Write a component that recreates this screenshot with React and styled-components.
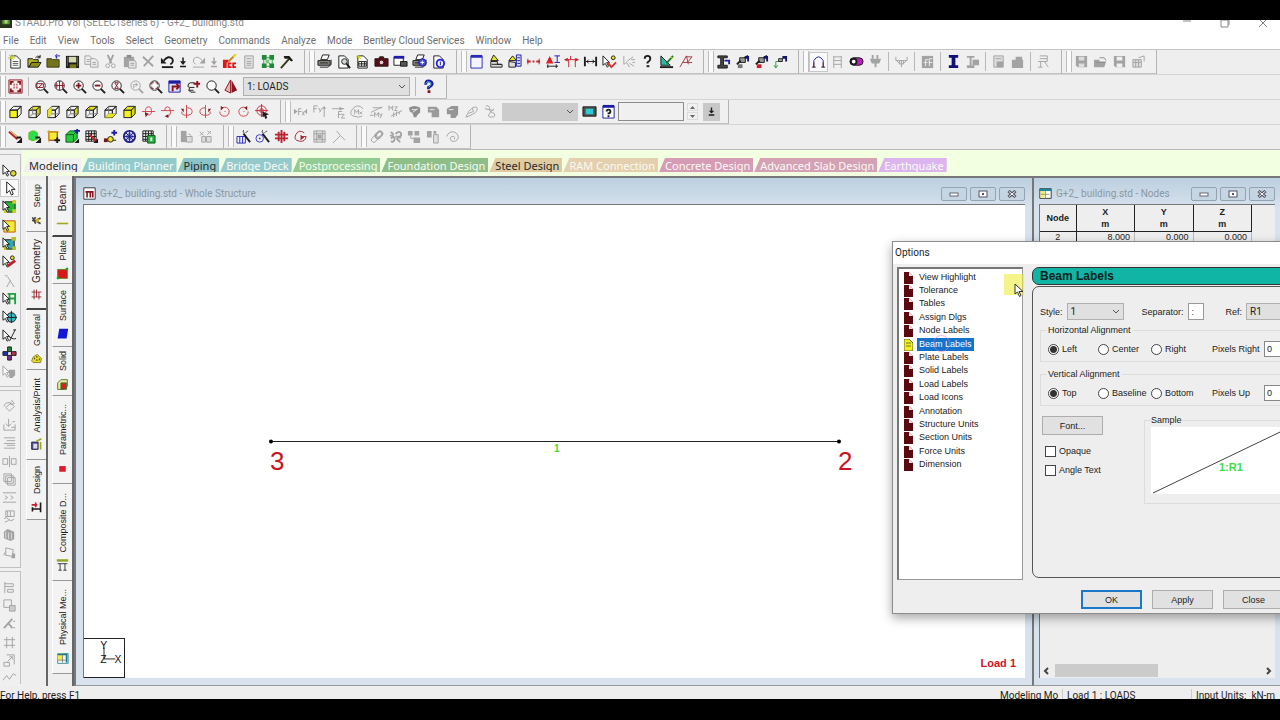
import React, { useState } from "react";
import styled, { createGlobalStyle, css } from "styled-components";

const BLACK = "#1c1c1c";
const GRAY = "#a3a3a3";
const RED = "#c8202c";
const WINE = "#8a1420";
const BLUE = "#1c1ca8";
const GREEN = "#22b03a";
const YELLOW = "#e8e81c";

const Line = ({ d, c = BLACK, w = 1 }) => <path d={d} fill="none" stroke={c} strokeWidth={w} />;
const Fill = ({ d, c = BLACK, s = "none" }) => <path d={d} fill={c} stroke={s} />;

const cube = (front, top, side) => (
  <>
    <Fill d="M2 6.500h8v8h-8z" c={front ? "#f4f41a" : "none"} s={BLACK} />
    <Fill d="M2 6.500l4-4h8l-4 4z" c={top ? "#e4e420" : "none"} s={BLACK} />
    <Fill d="M10 6.500l4-4v8l-4 4z" c={side ? "#d8d820" : "none"} s={BLACK} />
    {!front && <Line d="M6 2.500v8h8M2 14.500l4-4" c="#777" />}
  </>
);

const lens = (inner, c = BLACK) => (
  <>
    <circle cx="7" cy="7" r="5" fill={c === BLACK ? "#fafafa" : "none"} stroke={c} />
    <Line d="M10.500 10.500L15 15" c={c} w={2} />
    {inner}
  </>
);

const orbit = (d, head) => (
  <>
    <Line d={d} c="#d0444c" />
    <Fill d={head} c={WINE} />
  </>
);

const printer = (
  <>
    <Fill d="M4 6l2-5h7l-2 5z" c="#fff" s={BLACK} />
    <Fill d="M1 7h13v5H1z" c="#8a8a80" s={BLACK} />
    <Line d="M3 9.500h9M3 14h9l3-3V6" c={BLACK} w={1} />
  </>
);

const page = (c = BLACK, fill = "#fff") => <Fill d="M3 2h6l4 4v9H3z" c={fill} s={c} />;
const pointer = (c = BLACK) => <Fill d="M1 2v10l2.500-2 2 4 1.500-1-2-4h3z" c="#fafafa" s={c} />;
const disk = (c, inner) => (
  <>
    <Fill d="M2 2h12v12H4l-2-2z" c={c} />
    <Fill d="M5 3h6v4H5zM5 10h6v4H5z" c={inner} />
  </>
);
const flange = (accent) => (
  <>
    <Fill d="M5 4h6v5H5z" c="#999" s={BLACK} />
    <Line d="M2 11l4-4M10 4l4-2" w={2} />
    <Fill d="M11 2h4v6h-2V5h-2z" c="#15156c" />
    <Fill d="M3 11h5v4H3z" c={accent} />
  </>
);
const wand = (
  <>
    <Line d="M8 5l7 9" w={2} />
    <Line d="M7 3l2 1M13 2l-3 2M8 1v2" c="#555" />
  </>
);

const glyphs = {
  new: <>{page()}<Line d="M5 8h6M5 10h6M5 12h6" c="#555" /><Line d="M4 0v7M0 4h8M1 1l5 5M6 1L1 6" c="#c8cc28" /></>,
  open: <><Fill d="M1 5h5l1 1h5v3H5l-3 5H1z" c="#b4b428" s={BLACK} /><Fill d="M5 9h10l-3 5H2z" c="#8c8c1c" s={BLACK} /><Line d="M9 4q2-3 5-1M14 1v3h-3" /></>,
  close: <><Fill d="M1 5h5l1 1h7v8H1z" c="#74741c" s="#3c3c14" /><Line d="M11 5V2h4M12 0l-2 2 2 2" c={BLUE} /></>,
  save: <><Fill d="M1 2h14v13H1z" c={BLACK} /><Fill d="M4 3h8v6H4z" c="#d8d8b0" /><Fill d="M5 11h7v4H5z" c="#77771c" /><Fill d="M2 3h1v10H2zM13 3h1v10h-1z" c="#70701c" /></>,
  copy: <><Fill d="M1 2h5l3 3v6H1z" c="#ececec" s={GRAY} /><Fill d="M7 5h5l3 3v6H7z" c="#ececec" s={GRAY} /><Line d="M3 6h3M3 8h3M9 9h4M9 11h4" c={GRAY} /></>,
  cut: <><Line d="M5 1l4 9M11 1L7 10" c={GRAY} w={2} /><circle cx="5" cy="12.500" r="2" fill="none" stroke={GRAY} /><circle cx="11" cy="12.500" r="2" fill="none" stroke={GRAY} /></>,
  paste: <><Fill d="M2 3h11v11H2z" c={GRAY} /><Fill d="M5 1h5v3H5z" c="#8c8c8c" /><Fill d="M7 7h7l1 2v6H7z" c="#e4e4e4" s={GRAY} /><Line d="M9 10h4M9 12h4" c={GRAY} /></>,
  remove: <Line d="M2 3l11 10M13 2L3 13" c={GRAY} w={2} />,
  undo: <><Line d="M4 7q5-6 9-2 2 4-2 6" w={2} /><Fill d="M1 4v6h6z" /><Line d="M2 14h12" w={2} /></>,
  caret: <><Line d="M8 2v8M4 14h8" w={2} /><Fill d="M4 7h8l-4 5z" /></>,
  redo: <><Line d="M12 7Q7 1 3 5q-2 4 2 6" c={GRAY} /><Fill d="M15 4v6H9z" c={GRAY} /><Line d="M2 14h12" c={GRAY} /></>,
  caretOff: <><Line d="M8 2v8M4 14h8" c={GRAY} w={2} /><Fill d="M4 7h8l-4 5z" c={GRAY} /></>,
  edit: <><Fill d="M1 6h6v3H5v6H1z" c="#e01818" /><Line d="M10 10H7v4h3M15 10h-3v4h3" c="#e01818" w={2} /><Line d="M14 1L7 8" c="#b88c18" w={2} /><Line d="M15 0l-3 3" c="#e8e020" w={2} /></>,
  calc: <><Fill d="M4 2h9v13H4z" c="#e2e2e2" s={GRAY} /><Line d="M6 5h5M6 8h5M6 10h5M6 12h5" c={GRAY} w={1} /></>,
  nodes: <><Line d="M4 4h9v9H4zM4 4l9 9" c={GREEN} /><Fill d="M2 1h5v5H2zM10 1h5v5h-5zM2 10h5v5H2zM10 10h5v5h-5z" c="#208838" /><Fill d="M6 6h4v4H6z" c="#78c878" /></>,
  hammer: <><Line d="M2 15L11 5" c="#3c3018" w={2} /><Fill d="M5 2h6l4 5-2 1-3-3H6z" /></>,
  printer,
  preview: <>{page()}<circle cx="9" cy="8" r="3" fill="#cfd8d8" stroke={BLACK} /><Line d="M11 10l4 5" w={2} /></>,
  report: <>{page()}<Line d="M4 8h8v5H4zM4 10.500h8M7 8v5M10 8v5" /><Line d="M4 1v6M1 3h6M2 1l4 4" c="#c8cc28" /></>,
  camera: <><Fill d="M1 5h4l1-2h4l1 2h4v8H1z" c="#5c0c14" s={BLACK} /><circle cx="8" cy="9" r="2.500" fill="#e8c8c8" stroke={BLACK} /></>,
  exportView: <><Fill d="M1 3h10v9H1z" c="#fff" s={BLACK} /><Fill d="M1 2h11v3H1z" c={BLUE} /><Fill d="M8 8h7v5H8z" c="#555" s={BLACK} /></>,
  printSetup: <>{printer}<circle cx="11" cy="9" r="4" fill="#4a4ad0" stroke={BLUE} /><Line d="M9 9h4M11 7v4" c="#fff" /></>,
  pageSetup: <>{page()}<circle cx="10" cy="10" r="4" fill="#eef" stroke="#2626d8" strokeWidth="2" /><Line d="M10 8v4" c={BLUE} /></>,
  window: <><Fill d="M2 2h12v13H2z" c="#f4f4ff" s="#2a2ab8" /><Fill d="M2 1h12v3H2z" c="#2a2ab8" /></>,
  layers: <><Fill d="M6 1l5 6H3z" c={YELLOW} s={BLACK} /><Fill d="M3 8h7v3h5v3H3z" c="#ddd" s={BLACK} /><Line d="M4 11h10" /></>,
  layersList: <><Fill d="M6 2l4 5H2z" c={YELLOW} s={BLACK} /><Fill d="M2 8v6h7V9z" c="#ddd" s={BLACK} /><Fill d="M10 1h5v12h-5z" c="#dde" s={BLUE} /><Line d="M11 4h3M11 7h3M11 10h3" c={BLUE} /></>,
  dimension: <><Line d="M1 8h4M7 8h2M11 8h4" c={RED} w={2} /><Line d="M2 5v6M14 5v6" c={RED} /></>,
  section: <><Fill d="M5 2l4 8H1z" c="#e02020" /><Line d="M10 2h6M13 2v7M10 9h6" c={BLUE} w={1} /><Line d="M2 13h12M3 11v4M12 11v4" /></>,
  frame: <><Line d="M1 6h14M5 6v8M12 6v8M7 2v4" c={RED} w={1} /><Fill d="M0 6l4-2v4zM16 6l-4-2v4z" c={RED} /></>,
  span: <><Line d="M2 3v10M14 3v10" w={2} /><Line d="M3 8h10M6 6L4 8l2 2M10 6l2 2-2 2" w={1} /></>,
  pick: <>{pointer()}<circle cx="12" cy="4" r="2" fill={YELLOW} stroke={BLACK} /><Line d="M6 9l4 5 5-5" c="#d83030" w={2} /></>,
  pickOff: <><Line d="M3 2v9l3-2 3 5M6 8l7-5M9 10l5 3M11 6h4M12 9h3" c={GRAY} /></>,
  help: <><Line d="M5 5q0-3 3-3t3 3q0 2-3 4v1" w={2} /><Fill d="M7 12h3v2H7z" /></>,
  design: <><Fill d="M2 2l10 10H2z" c="#2cb8a0" s={BLACK} /><Line d="M15 2L8 10" c="#207828" w={2} /><Line d="M12 3l3 2" c={YELLOW} /><Line d="M1 14h14" w={2} /></>,
  az: <><Line d="M2 14L9 2l2 9M5 9h5M9 3h6l-5 6h5" c="#a83440" w={1} /></>,
  beamEnd: <><Fill d="M2 2h10v2H8v8h4v3H2v-3h3V4H2z" c="#444" s={BLACK} /><Fill d="M9 6h6v5h-2V8H9z" c={BLUE} /></>,
  flangeA: flange("#777"),
  flangeB: flange(RED),
  flangeC: <><Line d="M3 14V8h5l4-5" c="#28a030" w={1} /><Line d="M1 12l2 3 2-3" c="#28a030" /><Fill d="M10 2h5v6h-2V5h-3z" c="#15156c" /><Fill d="M6 5h4v3H6z" c="#aaa" s={BLACK} /></>,
  arch: <><Line d="M3 14V7q5-8 10 0v7" c={BLUE} /><Line d="M3 14V9M13 14V9" c={WINE} /><Line d="M1 14h4M11 14h4" c={BLACK} /></>,
  ladder: <Line d="M4 2v13M12 2v13M4 3h8M4 7h8M4 11h8" c={GRAY} w={1} />,
  tube: <><rect x="1" y="4" width="14" height="8" rx="4" fill="#b820c0" stroke={BLACK} /><circle cx="5" cy="8" r="3" fill="#fff" stroke={BLACK} strokeWidth="2" /></>,
  plug: <><Fill d="M2 5h12l-2 5H9v4H7v-4H4z" c={GRAY} /><Line d="M5 1v4M10 1v4" c={GRAY} w={2} /></>,
  bowl: <Line d="M2 3v4h12V3M3 7q5 8 10 0M6 7v4M8 7v7M10 7v4" c={GRAY} w={1} />,
  force: <><Fill d="M2 2h12v13H2z" c={GRAY} /><Line d="M6 13V6h3M4 9h4M10 13V5h3M9 9h4" c="#efefef" w={1} /></>,
  ibeam: <Fill d="M3 1h10v3h-3v8h3v3H3v-3h3V4H3z" c="#101078" />,
  ibeamOff: <><Fill d="M2 2h8v2H7v8h3v3H2v-3h3V4H2z" c={GRAY} /><Fill d="M8 6h7v6H8z" c={GRAY} /></>,
  docOff: <><Fill d="M3 2h10v12H3z" c="#ddd" s={GRAY} /><Fill d="M6 8h7v6H6z" c={GRAY} /><Line d="M5 5h6" c={GRAY} /></>,
  folderOff: <Fill d="M2 6h4V3h7v3h1v9H2z" c={GRAY} />,
  runOff: <Line d="M4 2h8v6H5v6M4 5h8M9 8l4 6M2 8h4M2 14h5" c={GRAY} w={1} />,
  diskA: disk(GRAY, "#dcdcdc"),
  openOff: <><Fill d="M1 6h6v2h7l-2 6H1z" c={GRAY} /><Line d="M7 4h5l2 3M3 9h10" c="#8c8c8c" /></>,
  diskB: disk(GRAY, "#f0f0f0"),
  gridOff: <><Fill d="M2 6h9v8H2z" c="#ddd" s={GRAY} /><Line d="M2 9h9M5 6v8M8 6v8M8 4l6-2v6" c={GRAY} w={1} /></>,

  fit: <><Fill d="M1 1h14v14H1z" c="#fbeaea" s={WINE} /><Line d="M3 6V3h3M10 3h3v3M13 10v3h-3M6 13H3v-3" c={WINE} w={2} /><Line d="M6 6h1M9 6h1M6 9h1M9 9h1" c={WINE} w={2} /></>,
  zoomWindow: lens(<Line d="M3 5h7v4H3zM5 9l4-4" c={WINE} />),
  zoomAll: lens(<Line d="M7 2v10M2 7h10M4 4v6M10 4v6" c={WINE} />),
  zoomIn: lens(<Line d="M7 4v6M4 7h6" c={WINE} w={2} />),
  zoomOut: lens(<Line d="M4 7h6" c={WINE} w={2} />),
  zoomFactor: lens(<Line d="M5 4h4L5 10h4L5 4" c={WINE} />),
  zoomOff: lens(<Line d="M5 10V6h4M7 4l2 2-2 2" c={GRAY} w={1} />, GRAY),
  zoomExtent: lens(<Line d="M4 6V4h2M8 4h2v2M10 8v2H8M6 10H4V8" c={WINE} />),
  zoomPrev: <><Fill d="M2 2h12v12H2z" c="#dfe0ff" s={BLUE} /><Fill d="M2 2h12v3H2z" c={BLUE} /><Line d="M6 13V8h6M10 5l3 3-3 3" c={WINE} w={2} /></>,
  pan: <><Line d="M2 8q0-4 3-4h4M2 8l2 1h5M3 12h5M4 9l-1 3 2 2h5" c={BLACK} /><Line d="M8 5h7M12 2v7" c={WINE} w={2} /></>,
  magnify: lens(null),
  symbol: <><Fill d="M7 1L1 12l6 3z" c="#e8b0b0" s={WINE} /><Fill d="M8 1l6 11-6 3z" c={WINE} /></>,
  whatsThis: <><Line d="M5 6q0-4 3-4t4 3q0 2-4 4v2" c={BLUE} w={3} /><Line d="M5 5q1-3 4-2t1 4l-2 2" c="#48b8c8" w={1} /><Fill d="M7 12h3v3H7z" c={WINE} /></>,

  cubeFront: cube(true, false, false),
  cubeBack: cube(false, true, true),
  cubeLeft: <>{cube(false, false, false)}<Fill d="M2 6.500l4-4v8l-4 4z" c="#e4e420" /></>,
  cubeRight: cube(false, false, true),
  cubeTop: cube(false, true, false),
  cubeBottom: <>{cube(false, false, false)}<Fill d="M2 14.500l4-4h8l-4 4z" c="#e4e420" /></>,
  cubeIso: cube(true, true, true),
  rotXUp: orbit("M1 8h14M5 10q-1-7 3-7t3 7q-2 3-5 1", "M4 9l4 1-3 4z"),
  rotXDown: orbit("M1 7h14M5 7q0-4 3-4t3 4q1 6-4 6", "M9 11l-4 2 4 2z"),
  rotYLeft: orbit("M8 1v14M8 4q6 0 6 4t-6 4-5-4", "M2 5h3v4z"),
  rotYRight: orbit("M8 1v14M8 4Q2 4 2 8t6 4 5-4", "M14 5h-3v4z"),
  rotZLeft: orbit("M5 4q6-2 8 3 0 6-5 6t-5-5M8 8h1", "M4 2l3 2-3 3z"),
  rotZRight: orbit("M11 4Q5 2 3 7q0 6 5 6t5-5M8 8h1", "M12 2L9 4l3 3z"),
  target: <><circle cx="7" cy="7" r="5" fill="none" stroke="#d02838" /><circle cx="7" cy="7" r="2" fill="none" stroke="#d02838" /><Line d="M7 0v14M0 7h14" c="#d02838" /><Fill d="M8 8l7 3-3 1 1 3-2 1-1-3-2 1z" /></>,
  fx: <><Fill d="M1 5l4 3-4 3zM15 5l-3 3 3 3z" c={GRAY} /><Line d="M6 12V5h3M6 8h3M10 8l2 4M12 8l-2 4" c={GRAY} /></>,
  fy: <><Line d="M2 9V2h4M2 5h3M7 4l2 4M11 4L8 9M13 3v11" c={GRAY} /><Fill d="M11 5l2-3 2 3z" c={GRAY} /></>,
  fz: <><Line d="M1 5h13M8 15V8h4M8 11h3M11 11h3l-3 4h4" c={GRAY} /><Fill d="M9 3l4 2-4 2z" c={GRAY} /></>,
  mx: <><Line d="M14 5Q8-1 3 5t1 8 9 0M5 11V6l2 3 2-3v5M10 8l3 3M13 8l-3 3" c={GRAY} /></>,
  my: <><Line d="M2 9l12-6M4 4h10M6 14V9l2 3 2-3v5M11 10l2 3M14 10l-2 5M1 12h4" c={GRAY} /></>,
  mz: <><Line d="M1 7V2l2 3 2-3v5M7 3h3L7 7h3M3 13l12-6M6 9v5M9 8v5M12 8v3" c={GRAY} /></>,
  stressA: <><Fill d="M2 4q6-4 12 0v5q-3 2-4 5H7q0-4-4-6z" c="#8f8f8f" /><Line d="M5 6h6M6 9l5-4" c="#eee" /></>,
  stressB: <><Fill d="M2 3h9l3 3v8H6V9H2z" c="#9a9a9a" /><Line d="M4 6h5" c="#eee" w={1} /></>,
  stressC: <><Fill d="M2 5l5-3h7v9l-3 4H6v-4H2z" c="#959595" /><Line d="M4 6h5" c="#eee" /></>,
  leaf: <Line d="M2 14l3-6q6-7 9-4 1 4-5 7l-4 2zM5 10l5-2-1-4" c={GRAY} />,
  spiral: <Line d="M3 2q4-1 4 3t5 5q2 4-3 4t-2-4 5-5M2 5l9 2" c={GRAY} w={1} />,
  screen: <><Fill d="M1 3h14v10H1z" c="#4c5050" s={BLACK} /><Fill d="M4 5h8v6H4z" c="#2ccbd0" /></>,
  queryBox: <><Fill d="M2 2h12v13H2z" c="#fff" s={BLUE} /><Fill d="M2 1h12v3H2z" c={BLUE} /><Line d="M6 8q0-2 2-2t2 2-2 2v1M8 12v2" w={2} /></>,
  down: <><Line d="M8 2v7M4 13h8" w={2} /><Fill d="M4 7h8l-4 4z" /></>,

  addBeam: <><Line d="M1 3l9 8" c="#c02020" w={2} /><Line d="M3 2l7 6" c="#b0a018" /><Fill d="M9 15l6-6v6zM9 8h5v2H9z" /></>,
  addPlate: <><Fill d="M2 4q5-4 9 0v7q-5 3-9 0z" c="#28e048" s="#60b818" /><Fill d="M9 15l6-6v6zM9 8h5v2H9z" /></>,
  addSurface: <><Fill d="M3 3h9v9H3z" c="#f4ec30" s={WINE} /><Line d="M1 3h13M3 1v13" c="#d8a818" /><Line d="M9 12h6M12 9v6" w={2} /></>,
  addSolid: <><Fill d="M1 6l4-4h8v8l-4 4H1z" c="#28c840" s="#0b5a18" /><Line d="M1 6h8v8M9 6l4-4" c="#0b5a18" /><Line d="M10 2h6M13 0v5" c={BLUE} w={2} /><Fill d="M10 15l5-5v5z" /></>,
  meshRed: <><Fill d="M2 2h11v11H2z" c="#e8e8e8" s={BLACK} /><Line d="M5 2v11M8 2v11M11 2v11M2 5h11M2 8h11M2 11h11" /><Line d="M6 6l8 8" c="#d02020" w={2} /><Fill d="M10 15l5-5v5z" /></>,
  addNode: <><Line d="M1 12h13" w={1} /><Line d="M9 4h6M12 1v6" c={BLUE} w={2} /><Fill d="M1 10h4v4H1z" c="#7c1414" /><circle cx="8" cy="11" r="3" fill={YELLOW} stroke={BLACK} /></>,
  wheel: <><circle cx="8" cy="8" r="6" fill="#d8dcff" stroke="#24248c" strokeWidth="2" /><circle cx="8" cy="8" r="3" fill="none" stroke="#24248c" /><Line d="M8 2v12M2 8h12M4 4l8 8M12 4l-8 8" c="#24248c" /></>,
  meshGreen: <><Fill d="M2 2h11v11H2z" c="#e8f0e8" s={BLACK} /><Line d="M5 2v11M8 2v11M11 2v11M2 5h11M2 8h11M2 11h11" /><Fill d="M7 7h8v8H7z" c="#28b040" s="#0b5a18" /><Fill d="M10 9h2v4h-2z" c="#fff" /></>,
  physA: <><Fill d="M2 2h6v12H2z" c={GRAY} /><Fill d="M8 8h6v6H8z" c="#ddd" s={GRAY} /><Line d="M4 5h2M4 8h2M10 5l3 2" c={GRAY} /></>,
  physB: <><Line d="M2 3l4 4M6 3L2 7M10 2l4 3M14 2l-4 4" c={GRAY} w={1} /><Fill d="M4 8h4v6H4zM9 8h5v6H9z" c="#ddd" s={GRAY} /></>,
  wandGrid: <><Fill d="M1 8h9v7H1z" c="#eef" s="#2a2ac0" /><Line d="M4 8v7M7 8v7" c="#2a2ac0" />{wand}</>,
  wandRing: <><circle cx="5" cy="10" r="4" fill="none" stroke="#3838c8" /><circle cx="5" cy="10" r="1" fill="#3838c8" />{wand}</>,
  barsRed: <Line d="M5 3v10M8 1v14M11 3v10M1 6h14M1 10h14" c="#b82430" w={2} />,
  turnRed: <><Line d="M12 4Q6 0 3 6t4 7q6 1 7-5H9" c="#a82838" w={1} /><Fill d="M8 6l4 3-4 3z" c="#a82838" /></>,
  tableOff: <><Fill d="M2 2h12v12H2z" c="#ddd" s={GRAY} /><Line d="M5 2v12M11 2v12M2 5h12M2 11h12" c={GRAY} w={1} /><Fill d="M6 6h4v4H6z" c={GRAY} /></>,
  branchOff: <Line d="M6 2l4 5-8 8M10 7l5 5" c={GRAY} w={1} />,
  link: <><rect x="6" y="1" width="5" height="8" rx="2" fill="none" stroke={GRAY} strokeWidth="2" transform="rotate(45 8 8)" /><rect x="6" y="7" width="5" height="8" rx="2" fill="none" stroke={GRAY} strokeWidth="1" transform="rotate(45 8 8)" /></>,
  unlink: <Line d="M3 3l3 3M2 7h4M8 5q5-4 6 0t-6 3M3 10q5-3 4 1t-4 2M9 10l4 4M10 9h4" c={GRAY} w={2} />,
  blockA: <><Fill d="M1 2h5v5H1zM8 2h5v5H8zM7 9h7v6H7z" c={GRAY} /><Line d="M4 7v3h4" c={GRAY} w={1} /></>,
  blockB: <><Fill d="M1 2h5v7H1zM8 2h3v3H8z" c={GRAY} /><Fill d="M8 6h5v9H8z" c="#ddd" s={GRAY} /></>,
  swirl: <><Line d="M2 8q1-5 7-5 6 2 5 7-2 4-7 3-3-3 0-5 4-1 3 3" c={GRAY} w={1} /></>,

  nodeCursor: <>{pointer()}<circle cx="12" cy="11" r="3" fill="#d8d828" stroke={BLACK} /></>,
  cursor: <Fill d="M5 1v12l3-3 2 5 2-1-2-5h4z" c="#fff" s={BLACK} />,
  plateCursor: <><Fill d="M3 3h11v11H3z" c="#28b838" s={BLACK} /><Fill d="M11 1h4v4h-4zM11 11h4v4h-4zM2 11h4v4H2z" c="#c8d028" />{pointer()}</>,
  surfCursor: <><Fill d="M2 3h12v12H2z" c="#f0ec30" s="#c05018" />{pointer()}</>,
  solidCursor: <><Fill d="M3 4h10v10H3z" c="#30a8b0" s={BLACK} /><Fill d="M10 1h5v4h-5zM11 11h4v4h-4zM2 11h4v4H2z" c="#b8c028" />{pointer()}</>,
  physCursor: <>{pointer()}<Line d="M6 13l8-6" c="#c02030" w={3} /><circle cx="11" cy="4" r="2" fill={YELLOW} stroke={BLACK} /></>,
  textOff: <Line d="M3 3h3M6 4l7 11M9 8l-4 7" c={GRAY} w={1} />,
  geoCursor: <><Line d="M6 3h9M6 8h9M8 3v11M14 3v11" c="#20a040" w={2} />{pointer()}</>,
  axisCursor: <><circle cx="10" cy="9" r="5" fill="#38b8c0" stroke={BLACK} /><Line d="M10 2v13M4 9h12" />{pointer()}</>,
  edgeCursor: <>{pointer()}<Line d="M14 2L8 14M7 9q6 4 8 2M12 2h3" /></>,
  plus: <><Fill d="M6 1h4v5H6z" c="#208838" s={BLACK} /><Fill d="M10 6h5v4h-5z" c="#c03048" s={BLACK} /><Fill d="M6 10h4v5H6z" c="#8828a0" s={BLACK} /><Fill d="M1 6h5v4H1z" c="#2030b8" s={BLACK} /></>,
  groupOff: <>{pointer(GRAY)}<Fill d="M7 6h7v6l-3 3H8z" c={GRAY} /></>,
  rotOff: <Line d="M2 8q1-5 7-4l4 4-5 5-4-4 6-5M10 1l3 4-4 1" c={GRAY} w={1} />,
  moveOff: <Line d="M2 14h12V8M7 2v8M4 7l3 3 3-3M11 5h3M10 11h4M2 8v6" c={GRAY} w={1} />,
  barsOff: <Line d="M2 3h12M5 6h9M2 9h12M5 11h9M2 14h12" c={GRAY} w={1} />,
  splitOff: <Line d="M1 5h5v6H1zM10 5h5v6h-5zM8 2v12" c={GRAY} w={1} />,
  stackOff: <Line d="M2 2h8v8H2zM4 4h8v8H4zM6 6h8v8H6z" c={GRAY} w={1} />,
  arrowsOff: <Line d="M1 3h14M1 13h14M3 6l3 2-3 2M9 6l3 2-3 2" c={GRAY} w={1} />,
  commentOff: <Line d="M4 2h9v6H4zM6 2v6M9 2v6M2 10q3-2 5 1t6 0M3 14q4-1 5-3" c={GRAY} w={1} />,
  blocksOff: <><Fill d="M2 5l4-3 7 3v8l-4 2-7-3z" c={GRAY} /><Line d="M4 5v7M7 6v7M10 6v7" c="#ddd" /></>,
  fillOff: <><Line d="M4 3l8 2-1 7-7-1zM3 8l-1 3" c={GRAY} w={1} /><Fill d="M11 9h3v5h-4z" c={GRAY} /></>,
  alignOff: <Line d="M3 2v12M3 4h9v3H3M6 10h6v3H6z" c={GRAY} w={1} />,
  squaresOff: <><Line d="M2 2h8v8H2z" c={GRAY} /><Fill d="M8 8h6v6H8z" c="#ccc" s={GRAY} /></>,
  slashOff: <Line d="M2 13L11 3M7 8l4 5M13 5v1M13 12v1" c={GRAY} w={2} />,
  hashOff: <Line d="M5 2v12M11 2v12M2 5h12M2 11h12" c={GRAY} w={1} />,
  areaOff: <><Line d="M2 10h6v4H2zM5 2h8v10" c={GRAY} /><Line d="M6 9l5-5M8 4h3v3" c={GRAY} w={1} /></>,
  zigOff: <Line d="M1 12l4-5 3 4 4-6 3 2" c={GRAY} />,

  setup: <><Line d="M3 4l4 8M7 4l-4 5M13 5L7 8l6 4" c="#444" w={2} /><Fill d="M7 6h4v4H7z" c="#c8b020" /></>,
  geometry: <Line d="M2 5h12M2 11h12M5 2v12M11 5v9M8 2v9" c={WINE} w={1} />,
  general: <><Fill d="M2 11l2-5 5-3 5 5-1 5H4z" c="#e4dc20" s="#77701c" /><Line d="M5 8h1M8 6h1M8 10h1M11 9h1" c={BLACK} w={2} /></>,
  analysis: <><Fill d="M2 5h8v9H2z" c="#4848a0" s={BLACK} /><Fill d="M4 7h5v6H4z" c="#ddd" /><Line d="M8 4l6-3M13 5v9" c="#98a820" w={2} /></>,
  steel: <><Line d="M3 14V9M13 15V3M3 11h10" w={2} /><Line d="M2 6h7M7 3v6" c={RED} w={2} /></>,
  beam: <Line d="M1 8h14" c="#a0a820" w={2} />,
  plate: <><Fill d="M2 3h12v11H2z" c="#d81818" s="#508818" /><Fill d="M1 12h3v3H1zM12 1h3v3h-3z" c="#20a020" /></>,
  surface: <Fill d="M4 2h11l-2 12H2z" c="#1414d8" />,
  solid: <><Fill d="M2 6l4-4h8v8l-4 4H2z" c="#e8e8a0" s="#486818" /><Fill d="M6 6h7v8H6z" c="#d82020" s="#208828" /></>,
  parametric: <Fill d="M4 5h8v7H4z" c="#e01828" />,
  composite: <><Line d="M1 3h14" c="#8ca820" w={3} /><Line d="M2 7h12M5 7v8M11 7v8M3 15h4M9 15h4" w={1} /></>,
  physical: <><Fill d="M2 2h13v12H2z" c="#f4f4f4" s="#208898" /><Fill d="M2 2h6v8H2z" c="#f4ec48" /><Line d="M13 3v10M2 3h12" c="#1c7888" w={2} /><Line d="M8 3v10M2 10h10" c="#777" /></>,
  structWin: <><Fill d="M1 1h14v14H1z" c="#fff" s={BLACK} /><Line d="M3 6h10M5 6v7M9 6v7M12 5v8" c={WINE} w={2} /></>,
  tableWin: <><Fill d="M1 2h14v12H1z" c="#fff" s={BLACK} /><Fill d="M2 5h5v8H2z" c="#f0f060" /><Fill d="M1 2h14v3H1z" c="#20889c" /><Line d="M8 5v9M2 9h11" c="#888" /></>,
  app: <><Fill d="M0 0h16v16H0z" c="#28331c" /><Fill d="M3 5h10v6H3z" c="#4c9040" /><Fill d="M6 1h4v9H6z" c="#b8d060" /></>,
};

const row1 = [
  "new open close save copy cut paste remove undo caret redo caretOff edit calc nodes hammer",
  "printer preview report camera exportView printSetup pageSetup",
  "window layers layersList dimension section frame span pick pickOff help design az",
  "beamEnd flangeA flangeB flangeC",
  "arch ladder tube plug | bowl | force | ibeam ibeamOff | docOff folderOff | runOff",
  "diskA openOff diskB gridOff",
];
const viewTools = "fit | zoomWindow zoomAll zoomIn zoomOut zoomFactor zoomOff zoomExtent zoomPrev pan magnify symbol";
const rotateTools = "cubeFront cubeBack cubeLeft cubeRight cubeTop cubeBottom cubeIso rotXUp rotXDown rotYLeft rotYRight rotZLeft rotZRight target";
const resultTools = "fx fy fz mx my mz stressA stressB stressC leaf spiral";
const row4 = [
  "addBeam addPlate addSurface addSolid meshRed addNode wheel meshGreen",
  "physA physB",
  "wandGrid wandRing barsRed turnRed tableOff branchOff",
  "link unlink blockA blockB swirl",
];
const sideTools = [
  "nodeCursor cursor plateCursor surfCursor solidCursor physCursor textOff geoCursor axisCursor edgeCursor plus groupOff",
  "rotOff moveOff barsOff splitOff stackOff arrowsOff commentOff blocksOff fillOff",
  "alignOff squaresOff slashOff hashOff areaOff zigOff",
];

const menus = ["File", "Edit", "View", "Tools", "Select", "Geometry", "Commands", "Analyze", "Mode", "Bentley Cloud Services", "Window", "Help"];

const modes = [
  { name: "Modeling", bg: "#f0f0f0", dark: true },
  { name: "Building Planner", bg: "#95cacd" },
  { name: "Piping", bg: "#8cc4c9", dark: true },
  { name: "Bridge Deck", bg: "#95cacd" },
  { name: "Postprocessing", bg: "#92cc94" },
  { name: "Foundation Design", bg: "#8fbe88" },
  { name: "Steel Design", bg: "#e0cca2", dark: true },
  { name: "RAM Connection", bg: "#e4cfae" },
  { name: "Concrete Design", bg: "#d69cb6" },
  { name: "Advanced Slab Design", bg: "#d5a2b5" },
  { name: "Earthquake", bg: "#dcb5ef" },
];

const pages = [
  { name: "Setup", icon: "setup", size: 52 },
  { name: "Geometry", icon: "geometry", size: 78, active: true },
  { name: "General", icon: "general", size: 60 },
  { name: "Analysis/Print", icon: "analysis", size: 90 },
  { name: "Design", icon: "steel", size: 60 },
];

const subPages = [
  { name: "Beam", icon: "beam", size: 57, active: true },
  { name: "Plate", icon: "plate", size: 47 },
  { name: "Surface", icon: "surface", size: 63 },
  { name: "Solid", icon: "solid", size: 49 },
  { name: "Parametric...", icon: "parametric", size: 88 },
  { name: "Composite D...", icon: "composite", size: 97 },
  { name: "Physical Me...", icon: "physical", size: 93 },
];

const optionPages = [
  "View Highlight", "Tolerance", "Tables", "Assign Dlgs", "Node Labels", "Beam Labels", "Plate Labels", "Solid Labels",
  "Load Labels", "Load Icons", "Annotation", "Structure Units", "Section Units", "Force Units", "Dimension",
];

const Glyph = ({ name, size = 15 }) => (
  <svg width={size} height={size} viewBox="0 0 16 16" aria-hidden="true">
    {glyphs[name]}
  </svg>
);

const Tools = ({ list }) =>
  list.split(" ").map((name, i) =>
    name === "|" ? (
      <Divider key={i} />
    ) : (
      <ToolButton key={i} type="button" aria-label={name} $narrow={name.startsWith("caret")} $pressed={name === "arch" || name === "cursor"}>
        <Glyph name={name} size={name.startsWith("caret") ? 12 : 15} />
      </ToolButton>
    )
  );

const Chevron = () => (
  <svg width="8" height="8" viewBox="0 0 8 8" aria-hidden="true">
    <path d="M1 2l3 3 3-3" fill="none" stroke="#555" />
  </svg>
);

const Combo = ({ label, value, width, height, disabled }) => (
  <ComboWrap $width={width} $height={height} $disabled={disabled}>
    <select aria-label={label} defaultValue={value} disabled={disabled}>
      <option>{value}</option>
    </select>
    <Chevron />
  </ComboWrap>
);

const PageTabs = ({ items }) => (
  <PageColumn>
    {items.map(({ name, icon, size, active }) => (
      <PageTab key={name} type="button" $size={size} $active={active}>
        <span>{name}</span>
        <Glyph name={icon} size={13} />
      </PageTab>
    ))}
  </PageColumn>
);

const CaptionButtons = () => (
  <Captions>
    <button type="button" aria-label="Minimize">
      <svg width="10" height="8" viewBox="0 0 10 8"><rect x="1" y="3" width="8" height="3" fill="#fff" stroke="#667" /></svg>
    </button>
    <button type="button" aria-label="Maximize">
      <svg width="10" height="8" viewBox="0 0 10 8"><rect x="1" y="1" width="8" height="6" fill="#fff" stroke="#556" /><rect x="4" y="3" width="2" height="2" fill="#556" /></svg>
    </button>
    <button type="button" aria-label="Close">
      <svg width="10" height="8" viewBox="0 0 10 8"><path d="M1.500 1l7 6M8.500 1l-7 6" stroke="#556" strokeWidth="3" /><path d="M2 1.500l6 5M8 1.500l-6 5" stroke="#fff" /></svg>
    </button>
  </Captions>
);

const RadioRow = ({ name, options, note }) => {
  const [value, setValue] = useState(options[0]);
  return (
    <Radios>
      {options.map((option) => (
        <Choice key={option}>
          <input type="radio" name={name} checked={value === option} onChange={() => setValue(option)} />
          {option}
        </Choice>
      ))}
      <Offset>
        {note}
        <input type="text" defaultValue="0" />
      </Offset>
    </Radios>
  );
};

const OptionsDialog = () => {
  const [current, setCurrent] = useState("Beam Labels");
  return (
    <Dialog role="dialog" aria-label="Options">
      <DialogTitle>Options</DialogTitle>
      <DialogBody>
        <OptionList>
          {optionPages.map((name) => (
            <li key={name}>
              <OptionItem type="button" $active={name === current} onClick={() => setCurrent(name)}>
                <svg width="9" height="12" viewBox="0 0 9 12" aria-hidden="true">
                  <path d="M0 0h5l4 4v8H0z" fill={name === current ? "#f0f01c" : "#5c0810"} stroke={name === current ? "#66661c" : "none"} />
                  <path d={name === current ? "M2 4h5M2 7h5" : "M5 0v4h4z"} fill="#f6eaea" stroke={name === current ? "#77771c" : "none"} />
                </svg>
                <span>{name}</span>
              </OptionItem>
            </li>
          ))}
        </OptionList>
        <Sheet>
          <SheetTitle>{current}</SheetTitle>
          <SheetBody>
            <StyleRow>
              <span>Style:</span>
              <Combo label="Style" value="1" width={57} height={17} />
              <label htmlFor="separator">Separator:</label>
              <input id="separator" type="text" defaultValue=":" />
              <span>Ref:</span>
              <Combo label="Ref" value="R1" width={70} height={17} />
            </StyleRow>
            <Group>
              <legend>Horizontal Alignment</legend>
              <RadioRow name="horizontal" options={["Left", "Center", "Right"]} note="Pixels Right" />
            </Group>
            <Group>
              <legend>Vertical Alignment</legend>
              <RadioRow name="vertical" options={["Top", "Baseline", "Bottom"]} note="Pixels Up" />
            </Group>
            <LowerRow>
              <Checks>
                <DialogButton type="button">Font...</DialogButton>
                <Choice><input type="checkbox" />Opaque</Choice>
                <Choice><input type="checkbox" />Angle Text</Choice>
              </Checks>
              <SampleGroup>
                <legend>Sample</legend>
                <svg viewBox="0 0 150 67" height="67">
                  <rect width="150" height="67" fill="#fff" />
                  <path d="M2 66L150 -5" stroke="#444" />
                  <text x="68" y="44">1:R1</text>
                </svg>
              </SampleGroup>
            </LowerRow>
          </SheetBody>
        </Sheet>
      </DialogBody>
      <DialogFooter>
        <DialogButton type="button" $primary>OK</DialogButton>
        <DialogButton type="button">Apply</DialogButton>
        <DialogButton type="button">Close</DialogButton>
      </DialogFooter>
      <ClickSpot />
      <Pointer width="10" height="15" viewBox="0 0 10 15" aria-hidden="true">
        <path d="M1 1v10l2.500-2 2 4.500 1.500-1-2-4H9z" fill="#fff" stroke="#333" />
      </Pointer>
      <ClickRing />
    </Dialog>
  );
};

const App = () => (
  <Screen>
    <GlobalStyle />
    <Shell>
      <TitleBar>
        <Glyph name="app" size={12} />
        <h1>STAAD.Pro V8i (SELECTseries 6) - G+2_ building.std</h1>
        <WindowControls>
          <button type="button" aria-label="Minimize app"><svg width="10" height="10"><path d="M1 3h8" stroke="#888" /></svg></button>
          <button type="button" aria-label="Restore app"><svg width="10" height="10"><path d="M1 2h7v7H1zM3 0h6v7" fill="none" stroke="#888" /></svg></button>
          <button type="button" aria-label="Close app"><svg width="10" height="10"><path d="M1 1l8 8M9 1L1 9" stroke="#888" /></svg></button>
        </WindowControls>
      </TitleBar>
      <MenuBar>
        {menus.map((name) => (
          <button key={name} type="button">{name}</button>
        ))}
      </MenuBar>

      <ToolRow>
        {row1.map((list, i) => (
          <Band key={i}><Grip $first={i === 0} /><Tools list={list} /></Band>
        ))}
      </ToolRow>
      <ToolRow>
        <Band>
          <Grip $first />
          <Tools list={viewTools} />
          <Combo label="Load case" value="1: LOADS" width={167} height={19} />
          <Divider />
          <Tools list="whatsThis" />
        </Band>
      </ToolRow>
      <ToolRow>
        <Band><Grip $first /><Tools list={rotateTools} /></Band>
        <Band>
          <Grip />
          <Tools list={resultTools} />
          <Combo label="Result" value="" width={76} height={18} disabled />
          <Tools list="screen queryBox" />
          <NumberBox type="text" aria-label="Number" />
          <Spinner>
            <button type="button" aria-label="Up"><svg width="5" height="3"><path d="M0 3l2.500-3L5 3z" fill="#666" /></svg></button>
            <button type="button" aria-label="Down"><svg width="5" height="3"><path d="M0 0l2.500 3L5 0z" fill="#666" /></svg></button>
          </Spinner>
          <DropButton type="button" aria-label="Apply number"><Glyph name="down" size={11} /></DropButton>
        </Band>
      </ToolRow>
      <ToolRow>
        {row4.map((list, i) => (
          <Band key={i}><Grip $first={i === 0} /><Tools list={list} /></Band>
        ))}
      </ToolRow>

      <Body>
        <SideBar>
          {sideTools.map((list, i) => (
            <SideBand key={i}><Tools list={list} /></SideBand>
          ))}
        </SideBar>
        <Main>
          <ModeTabs>
            {modes.map(({ name, bg, dark }) => (
              <ModeTab key={name} type="button" $bg={bg} $dark={dark}>{name}</ModeTab>
            ))}
          </ModeTabs>
          <Workspace>
            <PageTabs items={pages} />
            <PageTabs items={subPages} />
            <Mdi>
              <MdiWindow>
                <MdiTitle>
                  <Glyph name="structWin" size={13} />
                  <span>G+2_ building.std - Whole Structure</span>
                  <CaptionButtons />
                </MdiTitle>
                <Canvas>
                  <Model viewBox="0 0 941 472" role="img">
                    <path d="M187 236H755" stroke="#222" />
                    <circle cx="187" cy="236" r="2" />
                    <circle cx="755" cy="236" r="2" />
                    <text className="node" x="186" y="264">3</text>
                    <text className="node" x="754" y="264">2</text>
                    <text className="beam" x="470" y="246">1</text>
                  </Model>
                  <CanvasFooter>
                    <Axes viewBox="0 0 40 40">
                      <path d="M20 9v12h12" fill="none" stroke="#222" />
                      <text x="16" y="10">Y</text>
                      <text x="16" y="25">Z</text>
                      <text x="31" y="25">X</text>
                    </Axes>
                    <span>Load 1</span>
                  </CanvasFooter>
                </Canvas>
              </MdiWindow>
              <MdiWindow $narrow>
                <MdiTitle>
                  <Glyph name="tableWin" size={13} />
                  <span>G+2_ building.std - Nodes</span>
                  <CaptionButtons />
                </MdiTitle>
                <TablePane>
                  <NodeTable>
                    <thead>
                      <tr>
                        <th>Node</th>
                        <th>X<br />m</th>
                        <th>Y<br />m</th>
                        <th>Z<br />m</th>
                      </tr>
                    </thead>
                    <tbody>
                      <tr>
                        <td>2</td>
                        <td>8.000</td>
                        <td>0.000</td>
                        <td>0.000</td>
                      </tr>
                    </tbody>
                  </NodeTable>
                  <ScrollBar>
                    <svg width="6" height="8"><path d="M5 1L2 4l3 3" fill="none" stroke="#444" strokeWidth="2" /></svg>
                    <Track><Thumb /></Track>
                    <svg width="6" height="8"><path d="M1 1l3 3-3 3" fill="none" stroke="#444" strokeWidth="2" /></svg>
                  </ScrollBar>
                </TablePane>
              </MdiWindow>
            </Mdi>
          </Workspace>
        </Main>
      </Body>

      <StatusBar>
        <StatusCell $grow>For Help, press F1</StatusCell>
        <StatusCell $width={62}>Modeling Mo</StatusCell>
        <StatusCell $width={129} $edge>Load 1 : LOADS</StatusCell>
        <StatusCell $width={89} $edge>Input Units:&nbsp; kN-m</StatusCell>
      </StatusBar>
      <OptionsDialog />
    </Shell>
  </Screen>
);

const uiFont = css`
  font-family: Roboto, "Open Sans", sans-serif;
  font-size: 10px;
`;

const GlobalStyle = createGlobalStyle`
  * {
    box-sizing: border-box;
  }
  body {
    margin: 0;
    background: #000;
    color: #1c1c1c;
    font-family: "Liberation Sans", Arial, sans-serif;
    font-size: 9px;
  }
  button,
  input,
  select {
    margin: 0;
    padding: 0;
    border: 0;
    border-radius: 0;
    background: none;
    color: inherit;
    font: inherit;
  }
  svg {
    display: block;
    flex: none;
  }
`;

const Screen = styled.div`
  display: flex;
  flex-direction: column;
  min-height: 100vh;
  padding: 20px 0 21px;
  background: #000;
`;

const Shell = styled.div`
  position: relative;
  display: flex;
  flex: 1;
  flex-direction: column;
  overflow: hidden;
  background: #eee;
`;

const TitleBar = styled.header`
  display: flex;
  align-items: flex-end;
  height: 12px;
  overflow: hidden;
  background: #fff;
  color: #8a8a8a;
  svg {
    margin-bottom: 4px;
  }
  h1 {
    ${uiFont}
    margin: 0 auto 0 3px;
    font-weight: 400;
    line-height: 18px;
  }
`;

const WindowControls = styled.div`
  display: flex;
  gap: 28px;
  padding-right: 12px;
  button {
    width: 10px;
  }
`;

const MenuBar = styled.nav`
  ${uiFont}
  display: flex;
  gap: 11px;
  height: 17px;
  padding-left: 3px;
  background: #fff;
  color: #6e6e6e;
`;

const ToolRow = styled.div`
  display: flex;
  height: 25px;
  border-top: 1px solid #c4c4c4;
  &:nth-of-type(n + 2) {
    border-top-color: #d4d4d4;
  }
`;

const Band = styled.div`
  display: flex;
  align-items: center;
  padding-right: 8px;
  border-right: 1px solid #b4b4b4;
  border-bottom: 1px solid #c0c0c0;
  background: #f0f0f0;
`;

const Grip = styled.i`
  width: 6px;
  height: 21px;
  margin-left: ${({ $first }) => ($first ? 0 : 4)}px;
  border: solid #bdbdbd;
  border-width: 0 1px;
  background: #fafafa;
`;

const ToolButton = styled.button`
  display: flex;
  align-items: center;
  justify-content: center;
  width: ${({ $narrow }) => ($narrow ? 12 : 19)}px;
  height: 20px;
  ${({ $pressed }) =>
    $pressed &&
    css`
      border: 1px solid #c8c8c8;
      background: #fafafa;
    `}
`;

const Divider = styled.i`
  width: 1px;
  height: 19px;
  margin: 0 3px;
  background: #b8b8b8;
`;

const ComboWrap = styled.div`
  ${uiFont}
  display: flex;
  align-items: center;
  width: ${({ $width }) => $width}px;
  height: ${({ $height }) => $height}px;
  margin: 0 2px;
  padding: 0 3px;
  border: 1px solid ${({ $disabled }) => ($disabled ? "#ccc" : "#b0b0b0")};
  background: ${({ $disabled }) => ($disabled ? "#ccc" : "#e0e0e0")};
  select {
    flex: 1;
    min-width: 0;
    appearance: none;
  }
`;

const NumberBox = styled.input`
  width: 66px;
  height: 19px;
  border: 1px solid #8c8c8c;
`;

const Spinner = styled.div`
  display: grid;
  gap: 1px;
  margin: 0 5px 0 3px;
  button {
    display: grid;
    place-items: center;
    width: 11px;
    height: 8px;
    border: 1px solid #dcdcdc;
  }
`;

const DropButton = styled.button`
  display: grid;
  place-items: center;
  width: 17px;
  height: 18px;
  background: #c8c8c8;
`;

const Body = styled.div`
  display: flex;
  flex: 1;
`;

const SideBar = styled.aside`
  width: 22px;
  padding-top: 4px;
  border-top: 1px solid #b8b8b8;
  background: #f0f0f0;
`;

const SideBand = styled.div`
  width: 21px;
  margin-bottom: 3px;
  padding: 6px 0 5px;
  border: solid #c0c0c0;
  border-width: 1px 1px 1px 0;
  ${ToolButton} {
    height: 18px;
  }
  ${ToolButton}:nth-child(3n) {
    height: 19px;
  }
  &:last-child {
    margin: 0;
    padding-bottom: 0;
    border-bottom: 0;
  }
  &:last-child ${ToolButton}:last-child {
    height: 15px;
  }
`;

const Main = styled.main`
  display: flex;
  flex: 1;
  flex-direction: column;
  min-width: 0;
`;

const ModeTabs = styled.div`
  display: flex;
  gap: 1px;
  height: 27px;
  padding: 8px 0 4px 1px;
  border-top: 1px solid #b8b8b8;
  background: #f2ffe0;
`;

const ModeTab = styled.button`
  padding: 0 3px 0 6px;
  background: ${({ $bg }) => $bg};
  clip-path: polygon(6px 0, 100% 0, 100% 100%, 0 100%);
  color: ${({ $dark }) => ($dark ? "#2a2a2a" : "#f8fbf4")};
  font-family: "Noto Sans", Verdana, sans-serif;
  font-size: 11px;
  line-height: 15px;
  white-space: nowrap;
`;

const Workspace = styled.div`
  display: flex;
  flex: 1;
`;

const PageColumn = styled.div`
  width: 26px;
  padding: 4px 1px 0 4px;
  border-right: 2px solid #666;
`;

const PageTab = styled.button`
  display: flex;
  flex-direction: column;
  align-items: center;
  justify-content: center;
  gap: 6px;
  width: 20px;
  height: ${({ $size }) => $size}px;
  border-bottom: ${({ $active }) => ($active ? "2px solid #444" : "1px solid #999")};
  border-left: 1px solid #fff;
  background: #f3f3f3;
  span {
    font-size: ${({ $active }) => ($active ? 10 : 9)}px;
    line-height: 12px;
    white-space: nowrap;
    writing-mode: vertical-rl;
    transform: rotate(180deg);
  }
`;

const Mdi = styled.div`
  display: flex;
  flex: 1;
  min-width: 0;
  border-top: 2px solid #77777b;
`;

const MdiWindow = styled.section`
  display: flex;
  flex: ${({ $narrow }) => ($narrow ? "0 0 248px" : "1")};
  flex-direction: column;
  min-width: 0;
  padding: 0 ${({ $narrow }) => ($narrow ? 5 : 7)}px 7px;
  border-left: 2px solid #77777b;
  border-bottom: 1px solid #999;
  background: linear-gradient(#bccfde, #d7e2ee 30px);
`;

const MdiTitle = styled.div`
  ${uiFont}
  display: flex;
  align-items: center;
  height: 26px;
  padding-top: 5px;
  color: #8b97a3;
  span {
    flex: 1;
    padding-left: 4px;
    white-space: nowrap;
  }
`;

const Captions = styled.div`
  display: flex;
  gap: 3px;
  button {
    display: grid;
    place-items: center;
    width: 26px;
    height: 14px;
    border: 1px solid #94a3b2;
    border-radius: 2px;
    background: #c6d5e2;
  }
`;

const Canvas = styled.div`
  display: flex;
  flex: 1;
  flex-direction: column;
  justify-content: flex-end;
  position: relative;
  border-top: 1px solid #777;
  border-left: 1px solid #777;
  background: #fff;
`;

const Model = styled.svg`
  position: absolute;
  inset: 0;
  width: 100%;
  height: 100%;
  .node {
    fill: #c8141e;
    font-size: 26px;
  }
  .beam {
    fill: #3cdc3c;
    font-size: 10px;
    font-weight: 700;
  }
`;

const CanvasFooter = styled.div`
  display: flex;
  align-items: center;
  justify-content: space-between;
  padding-right: 9px;
  color: #d01424;
  font-size: 11px;
  font-weight: 700;
  line-height: 14px;
  span {
    align-self: flex-start;
    padding-top: 18px;
  }
`;

const Axes = styled.svg`
  width: 41px;
  height: 40px;
  border: 1px solid #222;
  border-left: 0;
  fill: #111;
  font-size: 11px;
  font-weight: 400;
`;

const TablePane = styled.div`
  display: flex;
  flex: 1;
  flex-direction: column;
  justify-content: space-between;
  border-top: 1px solid #777;
  border-left: 1px solid #777;
  background: #eee;
`;

const NodeTable = styled.table`
  width: 212px;
  border-collapse: collapse;
  table-layout: fixed;
  th {
    height: 26px;
    padding: 0;
    border: solid #222;
    border-width: 0 1px 1px 0;
    font-size: 9px;
    line-height: 12px;
  }
  th:first-child {
    width: 36px;
  }
  td {
    padding: 0 4px 0 0;
    border-right: 1px solid #bbb;
    line-height: 11px;
    text-align: right;
  }
  td:first-child {
    padding: 0;
    border-color: #222;
    text-align: center;
  }
`;

const ScrollBar = styled.div`
  display: flex;
  align-items: center;
  height: 15px;
  padding: 0 3px;
`;

const Track = styled.div`
  flex: 1;
  margin: 0 5px 0 6px;
`;

const Thumb = styled.div`
  width: 50%;
  height: 13px;
  background: #cbcbcb;
`;

const StatusBar = styled.footer`
  ${uiFont}
  display: flex;
  height: 13px;
  padding-top: 3px;
  overflow: hidden;
  line-height: 14px;
`;

const StatusCell = styled.div`
  flex: ${({ $grow, $width }) => ($grow ? "1" : `0 0 ${$width}px`)};
  padding-left: ${({ $edge }) => ($edge ? 4 : 0)}px;
  border-left: ${({ $edge }) => ($edge ? "1px solid #ccc" : "0")};
  overflow: hidden;
  white-space: nowrap;
`;

const Dialog = styled.div`
  position: absolute;
  top: 221px;
  right: -50px;
  width: 438px;
  height: 373px;
  border: 1px solid #8c8c8c;
  background: #eee;
  box-shadow: 0 4px 10px rgba(0, 0, 0, 0.35);
`;

const DialogTitle = styled.div`
  ${uiFont}
  height: 22px;
  padding-left: 2px;
  background: #fff;
  line-height: 22px;
`;

const DialogBody = styled.div`
  display: flex;
  gap: 9px;
  height: 314px;
  padding: 3px 4px 0;
`;

const OptionList = styled.ul`
  width: 126px;
  height: 313px;
  margin: 0;
  padding: 2px 0 0 5px;
  border: 1px solid #999;
  border-top: 2px solid #777;
  border-left: 2px solid #777;
  background: #fff;
  list-style: none;
  li:nth-child(5n),
  li:nth-child(5n + 3) {
    padding-bottom: 1px;
  }
`;

const OptionItem = styled.button`
  display: flex;
  align-items: center;
  gap: 4px;
  height: 13px;
  span {
    padding: 0 2px;
    color: ${({ $active }) => ($active ? "#fff" : "#222")};
    background: ${({ $active }) => ($active ? "#1272cc" : "none")};
    line-height: 13px;
  }
`;

const Sheet = styled.div`
  display: flex;
  flex: 1;
  flex-direction: column;
  gap: 1px;
`;

const SheetTitle = styled.div`
  height: 18px;
  padding-left: 7px;
  border: 1px solid #333;
  border-radius: 7px;
  background: #10b5a5;
  color: #0c2020;
  font-size: 12px;
  font-weight: 700;
  line-height: 16px;
`;

const SheetBody = styled.div`
  flex: 1;
  padding: 16px 0 0 7px;
  border: 1px solid #555;
  border-radius: 7px;
`;

const StyleRow = styled.div`
  display: flex;
  align-items: center;
  gap: 4px;
  margin-bottom: 4px;
  ${ComboWrap} {
    margin: 0;
  }
  label {
    margin-left: 14px;
  }
  input {
    width: 16px;
    height: 17px;
    padding-left: 3px;
    border: 1px solid #999;
    background: #fff;
  }
  input + span {
    margin-left: 18px;
  }
`;

const Group = styled.fieldset`
  height: 38px;
  margin: 0 0 6px;
  padding: 0 0 0 7px;
  border: 1px solid #dcdcdc;
  legend {
    margin-left: -2px;
    padding: 0 2px;
    line-height: 12px;
  }
`;

const Radios = styled.div`
  display: grid;
  grid-template-columns: 50px 53px 61px 1fr;
  align-items: center;
  padding-top: 5px;
`;

const Choice = styled.label`
  display: flex;
  align-items: center;
  gap: 3px;
  line-height: 12px;
  white-space: nowrap;
  input {
    flex: none;
    width: 11px;
    height: 11px;
    border: 1px solid #444;
    background: #fff;
    appearance: none;
  }
  input[type="radio"] {
    border-radius: 50%;
  }
  input[type="radio"]:checked {
    background: radial-gradient(#333 0 3px, #fff 4px);
  }
`;

const Offset = styled.label`
  display: flex;
  align-items: center;
  justify-content: space-between;
  width: 82px;
  white-space: nowrap;
  input {
    width: 30px;
    height: 16px;
    padding-left: 2px;
    border: 1px solid #888;
    background: #fff;
  }
`;

const LowerRow = styled.div`
  display: flex;
  gap: 41px;
  padding-top: 2px;
`;

const Checks = styled.div`
  display: flex;
  flex-direction: column;
  gap: 7px;
  padding: 2px 0 0 2px;
  ${Choice} {
    padding-left: 3px;
  }
  button {
    margin-bottom: 3px;
  }
`;

const DialogButton = styled.button`
  width: 61px;
  height: 19px;
  border: ${({ $primary }) => ($primary ? "2px solid #1a78c8" : "1px solid #adadad")};
  background: #e1e1e1;
`;

const SampleGroup = styled.fieldset`
  height: 90px;
  margin: 0;
  padding: 1px 6px 0;
  border: 1px solid #dcdcdc;
  legend {
    padding: 0;
    line-height: 12px;
  }
  text {
    fill: #3ee03e;
    font-size: 11px;
    font-weight: 700;
  }
`;

const DialogFooter = styled.div`
  display: flex;
  gap: 10px;
  padding: 12px 0 0 188px;
`;

const ClickSpot = styled.i`
  position: absolute;
  top: 32px;
  left: 111px;
  width: 20px;
  height: 21px;
  background: rgba(236, 236, 60, 0.6);
`;

const Pointer = styled.svg`
  position: absolute;
  top: 41px;
  left: 121px;
`;

const ClickRing = styled.i`
  position: absolute;
  top: 93px;
  left: 40px;
  width: 17px;
  height: 17px;
  border: 1px solid rgba(220, 130, 190, 0.6);
  border-radius: 50%;
`;

export default App;
